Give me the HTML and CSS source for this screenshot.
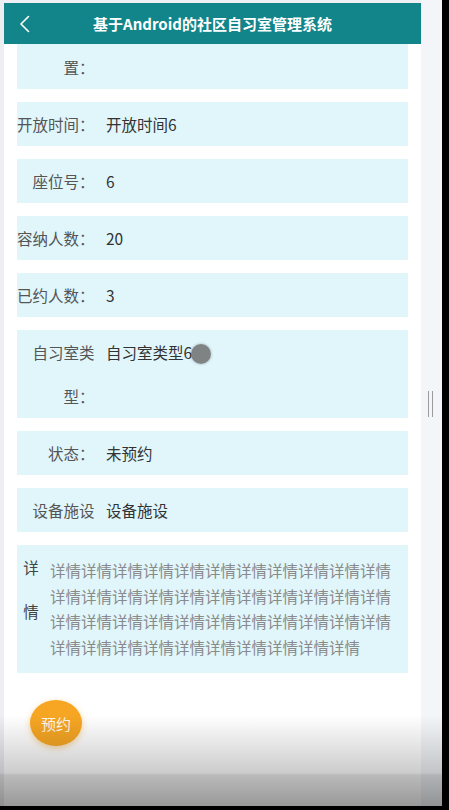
FILE: index.html
```html
<!DOCTYPE html>
<html lang="zh-CN">
<head>
<meta charset="utf-8">
<title>自习室详情</title>
<link rel="stylesheet" href="styles.css">
</head>
<body>
<div class="window">
  <div class="edge-left"></div>
  <div class="phone">
    <header class="nav">
      <svg class="back" width="12" height="18" viewBox="0 0 12 18"><polyline points="9.5,1.5 2,9 9.5,16.5" fill="none" stroke="#ffffff" stroke-width="1.6" stroke-linecap="round" stroke-linejoin="round"/></svg>
      <h1 class="title">基于Android的社区自习室管理系统</h1>
    </header>
    <div class="scroll">
      <div class="list">
        <div class="row"><div class="label">自习室位置：</div><div class="value"></div></div>
        <div class="row"><div class="label">开放时间：</div><div class="value">开放时间6</div></div>
        <div class="row"><div class="label">座位号：</div><div class="value">6</div></div>
        <div class="row"><div class="label">容纳人数：</div><div class="value">20</div></div>
        <div class="row"><div class="label">已约人数：</div><div class="value">3</div></div>
        <div class="row"><div class="label">自习室类型：</div><div class="value">自习室类型6<span class="touch"></span></div></div>
        <div class="row"><div class="label">状态：</div><div class="value">未预约</div></div>
        <div class="row"><div class="label">设备施设</div><div class="value">设备施设</div></div>
        <div class="row detail"><div class="detail-label">详情</div><div class="detail-text">详情详情详情详情详情详情详情详情详情详情详情详情详情详情详情详情详情详情详情详情详情详情详情详情详情详情详情详情详情详情详情详情详情详情详情详情详情详情详情详情详情详情详情</div></div>
        <button class="book">预约</button>
      </div>
    </div>
  </div>
  <div class="side"><span class="grip"></span></div>
</div>
<div class="shade"></div>
<script src="script.js"></script>
</body>
</html>
```

FILE: styles.css
```css
html, body {
  margin: 0;
  padding: 0;
}
body {
  width: 449px;
  height: 810px;
  background: #000;
  overflow: hidden;
  position: relative;
  font-family: "Noto Sans CJK SC", "Noto Sans", sans-serif;
}
.window {
  width: 442px;
  height: 806px;
  display: flex;
  background: #eef0f3;
}
.edge-left {
  width: 4px;
  flex: none;
  background: #eceef1;
}
.phone {
  width: 417px;
  flex: none;
  margin-top: 3px;
  background: #ffffff;
  display: flex;
  flex-direction: column;
  overflow: hidden;
}
.nav {
  height: 41px;
  flex: none;
  background: #12858a;
  display: flex;
  align-items: center;
  position: relative;
}
.back {
  margin-left: 15px;
  flex: none;
}
.title {
  position: absolute;
  left: 0;
  right: 0;
  top: 0;
  margin: 0;
  line-height: 41px;
  text-align: center;
  color: #ffffff;
  font-size: 15px;
  font-weight: bold;
  pointer-events: none;
}
.scroll {
  flex: 1;
  overflow: hidden;
}
.list {
  padding: 0 13px 300px 13px;
}
.row {
  display: flex;
  background: #e0f6fb;
  margin-bottom: 13px;
  font-size: 15.5px;
  line-height: 44px;
}
.label {
  width: 5em;
  flex: none;
  text-align: right;
  color: #555555;
}
.value {
  flex: 1;
  margin-left: 11.5px;
  color: #333333;
  position: relative;
}
.touch {
  position: absolute;
  top: 14px;
  left: 85px;
  width: 20px;
  height: 20px;
  border-radius: 50%;
  background: rgba(110, 110, 110, 0.85);
  box-shadow: 0 0 3px rgba(0, 0, 0, 0.3);
}
.detail {
  align-items: flex-start;
}
.detail-label {
  width: 28px;
  flex: none;
  text-align: center;
  line-height: 44px;
  color: #444444;
}
.detail-text {
  flex: 1;
  margin-left: 5px;
  padding: 13px 10px 13px 0;
  line-height: 25.5px;
  color: #8a8a8a;
  word-break: break-all;
}
.book {
  display: flex;
  align-items: center;
  justify-content: center;
  width: 52px;
  height: 46px;
  margin: 27px 0 0 13px;
  padding: 0;
  border: none;
  border-radius: 50%;
  background: #f6a623;
  color: #fff8ea;
  font-family: "Noto Sans CJK SC", sans-serif;
  font-size: 15px;
  box-shadow: 0 2px 6px rgba(240, 160, 30, 0.45);
}
.side {
  width: 21px;
  flex: none;
  background: #f4f5f9;
  display: flex;
  flex-direction: column;
  justify-content: center;
}
.grip {
  display: block;
  width: 3px;
  height: 26px;
  margin: 2px 0 0 7px;
  border-left: 1.5px solid #9c9c9c;
  border-right: 1.5px solid #9c9c9c;
}
.shade {
  position: absolute;
  left: 0;
  top: 715px;
  width: 442px;
  height: 91px;
  background: linear-gradient(to bottom, rgba(0,0,0,0) 0px, rgba(0,0,0,0.2) 58px, rgba(0,0,0,0.27) 60px, rgba(0,0,0,0.4) 91px);
  pointer-events: none;
}
```

FILE: script.js
```js
document.querySelector('.scroll').scrollTop = 43;
```
